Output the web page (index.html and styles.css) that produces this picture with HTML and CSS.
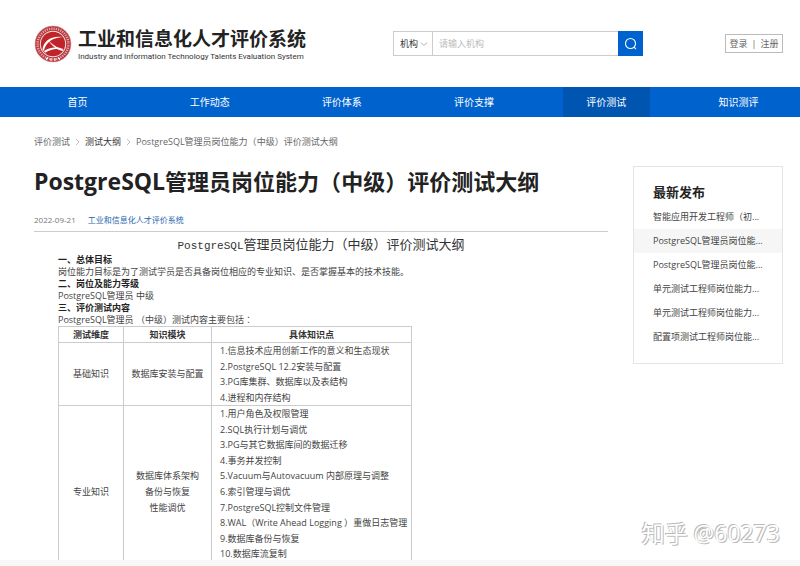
FILE: index.html
```html
<!DOCTYPE html>
<html lang="zh-CN">
<head>
<meta charset="utf-8">
<title>工业和信息化人才评价系统</title>
<link rel="stylesheet" href="styles.css">
</head>
<body>
<header class="header">
  <a class="brand" href="#">
    <svg class="brand-logo" viewBox="0 0 38 38" aria-hidden="true">
      <circle cx="19" cy="19" r="18" fill="#b8343a"/>
      <circle cx="19" cy="19" r="17.9" fill="none" stroke="#d58a8d" stroke-width=".6"/>
      <circle cx="19" cy="19" r="15.4" fill="none" stroke="#dda5a6" stroke-width="2.4" stroke-dasharray="1.3 1" stroke-dashoffset="1"/>
      <circle cx="19" cy="19" r="13.2" fill="#f6e3e2"/>
      <circle cx="19" cy="19" r="12.2" fill="#c0242b"/>
      <path d="M8.500 24.500C9.500 16 17 10.500 28.500 12C19 12.500 12 17 9.800 26Z" fill="#fff"/>
      <path d="M14.500 15.500C18 19 23 23 29.500 24.500L28.500 26C22 24.500 17.500 20.500 14.500 15.500Z" fill="#fff"/>
      <path d="M10 26C15 22.500 22 21.500 29.500 24C22 23.300 16 24.500 11.200 27.800Z" fill="#fff"/>
      <path d="M12 34.500l2-2M17 35.800v-2.500M21 35.800v-2.500M26 34.500l-2-2" stroke="#fff" stroke-width="1.200"/>
    </svg>
    <span class="brand-text">
      <span class="brand-name">工业和信息化人才评价系统</span>
      <span class="brand-en">Industry and Information Technology Talents Evaluation System</span>
    </span>
  </a>
  <form class="search">
    <span class="search-kind">
      <select aria-label="搜索类型"><option>机构</option></select>
      <svg class="chevron" viewBox="0 0 8 6" aria-hidden="true"><path d="M1 1.500l3 3 3-3" fill="none" stroke="#999" stroke-width=".8"/></svg>
    </span>
    <input class="search-input" type="text" placeholder="请输入机构" aria-label="请输入机构">
    <button class="search-button" type="button" aria-label="搜索">
      <svg viewBox="0 0 14 14" aria-hidden="true"><circle cx="6.500" cy="6.500" r="5" fill="none" stroke="#fff" stroke-width="1.100"/><path d="M10 10.200l2 2" stroke="#fff" stroke-width="1.100"/></svg>
    </button>
  </form>
  <div class="account"><a href="#">登录</a><span>|</span><a href="#">注册</a></div>
</header>
<nav class="nav">
  <a href="#">首页</a>
  <a href="#">工作动态</a>
  <a href="#">评价体系</a>
  <a href="#">评价支撑</a>
  <a class="active" href="#">评价测试</a>
  <a href="#">知识测评</a>
</nav>
<main class="main">
  <div class="crumbs">
    <a href="#">评价测试</a>
    <svg viewBox="0 0 5 8" aria-hidden="true"><path d="M1 1l3 3-3 3" fill="none" stroke="#bbb" stroke-width=".9"/></svg>
    <a class="strong" href="#">测试大纲</a>
    <svg viewBox="0 0 5 8" aria-hidden="true"><path d="M1 1l3 3-3 3" fill="none" stroke="#bbb" stroke-width=".9"/></svg>
    <span>PostgreSQL管理员岗位能力<span class="punct" lang="zh-TW">（</span>中级<span class="punct" lang="zh-TW">）</span>评价测试大纲</span>
  </div>
  <div class="columns">
    <article class="article">
      <h1><span class="latin">PostgreSQL</span>管理员岗位能力<span class="punct" lang="zh-TW">（</span>中级<span class="punct" lang="zh-TW">）</span>评价测试大纲</h1>
      <div class="meta"><time>2022-09-21</time><a href="#">工业和信息化人才评价系统</a></div>
      <h2><span class="mono">PostgreSQL</span>管理员岗位能力（中级）评价测试大纲</h2>
      <div class="body">
        <h3>一、总体目标</h3>
        <p>岗位能力目标是为了测试学员是否具备岗位相应的专业知识、是否掌握基本的技术技能。</p>
        <h3>二、岗位及能力等级</h3>
        <p>PostgreSQL管理员 中级</p>
        <h3>三、评价测试内容</h3>
        <p>PostgreSQL管理员 <span class="punct" lang="zh-TW">（</span>中级<span class="punct" lang="zh-TW">）</span>测试内容主要包括<span class="punct" lang="zh-TW">：</span></p>
        <table>
          <colgroup><col class="col-area"><col class="col-module"><col class="col-points"></colgroup>
          <thead><tr><th>测试维度</th><th>知识模块</th><th>具体知识点</th></tr></thead>
          <tbody>
            <tr>
              <td>基础知识</td>
              <td>数据库安装与配置</td>
              <td class="points"><ul class="basic">
                <li>1.信息技术应用创新工作的意义和生态现状</li>
                <li>2.PostgreSQL 12.2安装与配置</li>
                <li>3.PG库集群、数据库以及表结构</li>
                <li>4.进程和内存结构</li>
              </ul></td>
            </tr>
            <tr class="row-pro">
              <td>专业知识</td>
              <td>数据库体系架构<br>备份与恢复<br>性能调优</td>
              <td class="points"><ul class="pro">
                <li>1.用户角色及权限管理</li>
                <li>2.SQL执行计划与调优</li>
                <li>3.PG与其它数据库间的数据迁移</li>
                <li>4.事务并发控制</li>
                <li>5.Vacuum与Autovacuum 内部原理与调整</li>
                <li>6.索引管理与调优</li>
                <li>7.PostgreSQL控制文件管理</li>
                <li>8.WAL<span class="punct" lang="zh-TW">（</span>Write Ahead Logging <span class="punct" lang="zh-TW">）</span>重做日志管理</li>
                <li>9.数据库备份与恢复</li>
                <li>10.数据库流复制</li>
              </ul></td>
            </tr>
          </tbody>
        </table>
      </div>
    </article>
    <aside class="latest">
      <h2>最新发布</h2>
      <a href="#">智能应用开发工程师<span class="punct" lang="zh-TW">（</span>初...</a>
      <a class="current" href="#">PostgreSQL管理员岗位能...</a>
      <a href="#">PostgreSQL管理员岗位能...</a>
      <a href="#">单元测试工程师岗位能力...</a>
      <a href="#">单元测试工程师岗位能力...</a>
      <a href="#">配置项测试工程师岗位能...</a>
    </aside>
  </div>
</main>
<footer class="footer"></footer>
<div class="watermark">知乎 @60273</div>
</body>
</html>
```

FILE: styles.css
```css
* { box-sizing: border-box; }

body {
  margin: 0;
  height: 100vh;
  display: flex;
  flex-direction: column;
  overflow: hidden;
  background: #fff;
  color: #444;
  font: 9px/12px "Open Sans", "Noto Sans CJK SC", sans-serif;
}

a { color: inherit; text-decoration: none; }
h1, h2, h3, p, ul { margin: 0; padding: 0; }

/* Full-width punctuation centred in its box */
.punct { font-family: "Noto Sans CJK TC", sans-serif; line-height: 1; }

.header {
  flex: none;
  display: flex;
  align-items: center;
  height: 87px;
  padding: 0 17px 0 34px;
}

.brand { display: flex; align-items: center; gap: 6px; width: 359px; }
.brand-logo { width: 38px; height: 38px; flex: none; }
.brand-text { display: flex; flex-direction: column; padding-top: 2px; white-space: nowrap; }
.brand-name { font-size: 19px; line-height: 25px; font-weight: 700; color: #222; }
.brand-en { font-family: Roboto, sans-serif; font-size: 8px; line-height: 10px; color: #333; }

.search { display: flex; width: 250px; height: 25px; }
.search-kind {
  display: flex;
  align-items: center;
  width: 39px;
  padding-left: 6px;
  border: 1px solid #ccc;
  border-right: 0;
}
.search-kind select {
  appearance: none;
  width: 20px;
  padding: 0;
  border: 0;
  background: none;
  color: #333;
  font: inherit;
}
.chevron { width: 8px; height: 6px; }
.search-input {
  flex: 1;
  min-width: 0;
  padding: 0 6px;
  border: 1px solid #ccc;
  border-right: 0;
  border-radius: 0;
  font: inherit;
}
.search-input::placeholder { color: #bbb; }
.search-button {
  display: grid;
  place-items: center;
  width: 25px;
  padding: 0;
  border: 0;
  background: #0062cc;
}
.search-button svg { width: 14px; height: 14px; }

.account {
  display: flex;
  align-items: center;
  justify-content: center;
  gap: 4px;
  width: 58px;
  height: 19px;
  margin-left: auto;
  border: 1px solid #bbb;
  color: #666;
}

.nav {
  flex: none;
  display: flex;
  justify-content: space-between;
  height: 30px;
  padding: 0 18px 0 34px;
  background: #0062cc;
  color: #fff;
  font-size: 10px;
  line-height: 30px;
  text-align: center;
}
.nav a { width: 87px; }
.nav .active { background: #0055b0; }

.main { flex: 1; min-height: 0; overflow: hidden; padding: 19px 17px 0 34px; }

.crumbs { display: flex; align-items: center; gap: 5px; color: #666; }
.crumbs svg { width: 5px; height: 8px; }
.crumbs .strong { color: #333; }

.columns { display: flex; justify-content: space-between; align-items: flex-start; }

.article { width: 574px; padding-top: 17px; }
.article h1 { font-size: 22px; line-height: 32px; color: #222; white-space: nowrap; }
.article h1 .latin { font-size: 23px; }
.meta {
  display: flex;
  gap: 12px;
  margin-top: 11px;
  padding: 6px 0 5px;
  border-bottom: 1px solid #ccc;
  font-size: 8px;
  color: #777;
}
.meta a { color: #1f66b0; }
.article h2 {
  padding-top: 4px;
  font-size: 13px;
  line-height: 16px;
  font-weight: 400;
  text-align: center;
  color: #333;
}
.mono { font-family: "Liberation Mono", monospace; font-size: 11px; }
.body { padding: 0 24px; }
.body h3 { font-size: 9px; line-height: 12px; color: #222; }

table {
  width: 354px;
  table-layout: fixed;
  border-collapse: collapse;
  text-align: center;
  white-space: nowrap;
}
.col-area { width: 65px; }
.col-module { width: 88px; }
th, td { padding: 0; border: 1px solid #ccc; line-height: 16px; }
th { color: #333; line-height: 15px; }
td.points { padding-left: 8px; text-align: left; vertical-align: top; }
.points ul { display: grid; list-style: none; }
.points li { line-height: 15px; }
.basic { min-height: 62px; }
.pro { min-height: 156px; }
.row-pro { height: 172px; }

.latest {
  width: 150px;
  margin-top: 18px;
  padding: 16px 0 14px;
  border: 1px solid #e4e4e4;
}
.latest h2 { padding: 0 19px 4px; font-size: 13px; line-height: 18px; color: #222; }
.latest a {
  display: block;
  padding-left: 19px;
  line-height: 24px;
  white-space: nowrap;
}
.latest .current { background: #f6f6f6; }

.footer { flex: none; height: 6px; background: #f8f8f8; }

.watermark {
  position: absolute;
  right: 20px;
  bottom: 18px;
  font-size: 23px;
  line-height: 30px;
  color: #fff;
  text-shadow: -1px -1px 0 #bbb, 1px 1px 0 #bbb;
}
```
